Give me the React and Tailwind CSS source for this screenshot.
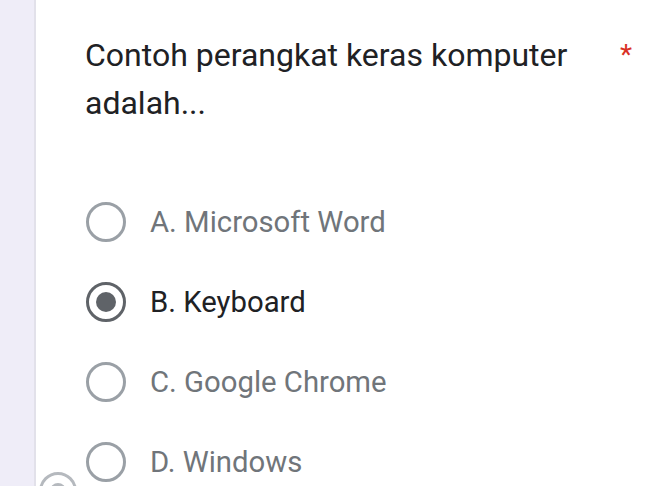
import React from "react";

const options = [
  { label: "A. Microsoft Word", selected: false },
  { label: "B. Keyboard", selected: true },
  { label: "C. Google Chrome", selected: false },
  { label: "D. Windows", selected: false },
];

const Radio = ({ selected }) => (
  <div
    className={`w-[40px] h-[40px] rounded-full border-[3.5px] flex items-center justify-center shrink-0 ${
      selected ? "border-[#5f6368]" : "border-[#9aa0a6]"
    }`}
  >
    {selected && <div className="w-[20px] h-[20px] rounded-full bg-[#5f6368]" />}
  </div>
);

export default function App() {
  return (
    <div
      className="relative w-[648px] h-[486px] overflow-hidden flex bg-white"
      style={{ fontFamily: "Roboto, 'Liberation Sans', sans-serif" }}
    >
      {/* page background strip */}
      <div className="w-[36px] shrink-0 bg-[#efedf8] border-r-2 border-[#e2e1ea]" />

      {/* question card */}
      <div className="flex-1 pl-[49px] pr-[14px] pt-[31px]">
        <div className="flex items-start">
          <h2 className="flex-1 text-[32px] leading-[48px] text-[#202124] pr-[30px]">
            Contoh perangkat keras komputer adalah...
          </h2>
          <span className="text-[#d93025] text-[28px] leading-[48px] mr-[2px]">*</span>
        </div>

        <div className="mt-[75px] flex flex-col gap-[40px]">
          {options.map((opt) => (
            <div key={opt.label} className="flex items-center h-[40px] pl-[1px]">
              <Radio selected={opt.selected} />
              <span
                className={`ml-[24px] text-[29.3px] leading-[40px] ${
                  opt.selected ? "text-[#202124]" : "text-[#70757a]"
                }`}
              >
                {opt.label}
              </span>
            </div>
          ))}
        </div>
      </div>

      {/* partially visible floating button at bottom */}
      <div className="absolute left-[39px] top-[472px] w-[38px] h-[38px] rounded-full border-[3px] border-[#b5b9be] bg-white flex items-center justify-center">
        <div className="w-[16px] h-[16px] rounded-full border-[3px] border-[#b5b9be]" />
      </div>
    </div>
  );
}
